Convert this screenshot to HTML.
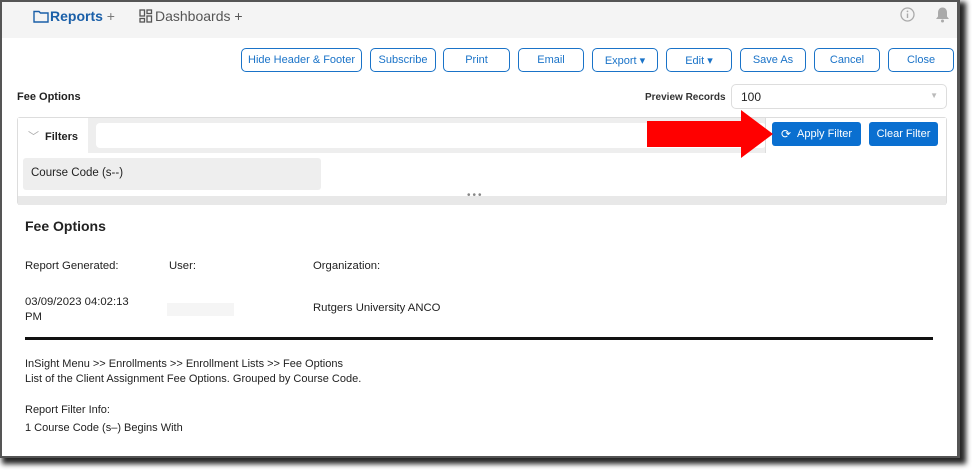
<!DOCTYPE html>
<html><head><style>
*{box-sizing:border-box;margin:0;padding:0}
body{width:972px;height:470px;background:#fff;font-family:"Liberation Sans",Arial,sans-serif;position:relative;overflow:hidden;color:#222}
.frame{position:absolute;left:0;top:0;width:960px;height:458px;border:2px solid #555;border-right-width:3px;background:#fff;box-shadow:4px 4px 5px 2px rgba(0,0,0,.85)}
.a{position:absolute;white-space:nowrap}
.hdr{position:absolute;left:0;top:0;width:955px;height:36px;background:#f4f4f4}
.btn{position:absolute;top:46px;height:24px;border:1.3px solid #1a73c8;border-radius:5px;color:#1a73c8;font-size:11px;display:flex;align-items:center;justify-content:center;background:#fff}
.bb{position:absolute;top:120px;height:24px;background:#0a6fd0;color:#fff;border-radius:3px;font-size:11px;display:flex;align-items:center;justify-content:center}
.t{font-size:11.5px;color:#222}
</style></head><body>
<div class="frame">
 <div class="hdr">
  <svg class="a" style="left:31px;top:8px" width="16" height="13" viewBox="0 0 16 13"><path d="M1 1.5h5l1.5 1.5H15v9H1z" fill="none" stroke="#1a5fa8" stroke-width="1.4"/></svg>
  <div class="a" style="left:48px;top:6px;font-size:14px;color:#1a5fa8;font-weight:bold">Reports <span style="color:#777;font-weight:normal">+</span></div>
  <svg class="a" style="left:137px;top:7px" width="14" height="14" viewBox="0 0 14 14" fill="none" stroke="#555" stroke-width="1.3"><rect x="1" y="1" width="4.5" height="6"/><rect x="8" y="1" width="4.5" height="3.5"/><rect x="1" y="9.5" width="4.5" height="3.5"/><rect x="8" y="7" width="4.5" height="6"/></svg>
  <div class="a" style="left:153px;top:6px;font-size:14px;color:#555">Dashboards +</div>
  <svg class="a" style="left:898px;top:5px" width="15" height="15" viewBox="0 0 15 15"><circle cx="7.5" cy="7.5" r="6.5" fill="none" stroke="#aaa" stroke-width="1.3"/><rect x="6.8" y="6.5" width="1.4" height="4.5" fill="#aaa"/><circle cx="7.5" cy="4.4" r=".9" fill="#aaa"/></svg>
  <svg class="a" style="left:933px;top:4px" width="15" height="18" viewBox="0 0 15 18"><path d="M7.5 1.5c-3 0-4.5 2.5-4.5 5v4L1 13h13l-2-2.5v-4c0-2.5-1.5-5-4.5-5z" fill="#aaa"/><circle cx="7.5" cy="15" r="1.5" fill="#aaa"/></svg>
 </div>
 <div class="btn" style="left:239px;width:121px">Hide Header &amp; Footer</div>
 <div class="btn" style="left:368px;width:66px">Subscribe</div>
 <div class="btn" style="left:441px;width:67px">Print</div>
 <div class="btn" style="left:516px;width:66px">Email</div>
 <div class="btn" style="left:590px;width:66px">Export ▾</div>
 <div class="btn" style="left:664px;width:66px">Edit ▾</div>
 <div class="btn" style="left:738px;width:66px">Save As</div>
 <div class="btn" style="left:812px;width:66px">Cancel</div>
 <div class="btn" style="left:886px;width:66px">Close</div>
 <div class="a" style="left:15px;top:89px;font-size:11px;font-weight:bold">Fee Options</div>
 <div class="a" style="left:643px;top:90px;font-size:10px;font-weight:bold;color:#333">Preview Records</div>
 <div class="a" style="left:729px;top:82px;width:216px;height:25px;border:1px solid #ddd;border-radius:5px;font-size:12px;padding:5px 0 0 9px">100<span style="position:absolute;right:8px;top:6px;color:#bbb;font-size:8px">▼</span></div>
 <div class="a" style="left:15px;top:115px;width:930px;height:88px;border:1px solid #ddd;border-radius:3px;background:#fff">
  <div class="a" style="left:0;top:0;width:928px;height:35px;background:#eee"></div>
  <div class="a" style="left:0;top:0;width:70px;height:35px;background:#fff;font-size:11px;font-weight:bold;padding:10px 0 0 10px"><span style="color:#aaa;font-weight:normal;margin-right:6px">﹀</span>Filters</div>
  <div class="a" style="left:78px;top:5px;width:670px;height:25px;background:#fff;border-radius:4px"></div>
  <div class="a" style="left:747px;top:0;width:181px;height:35px;background:#fff;border-left:1px solid #ddd"></div>
  <div class="a" style="left:5px;top:40px;width:298px;height:32px;background:#eee;border-radius:3px;font-size:11.5px;padding:9px 0 0 8px">Course Code (s--)</div>
  <div class="a" style="left:0;top:78px;width:928px;height:9px;background:#e8e8e8"><span style="position:absolute;left:449px;top:-6px;font-size:10px;color:#888;letter-spacing:2px">•••</span></div>
 </div>
 <div class="bb" style="left:770px;width:89px"><span style="font-size:12px;margin-right:6px">⟳</span>Apply Filter</div>
 <div class="bb" style="left:867px;width:69px">Clear Filter</div>
 <svg class="a" style="left:643px;top:108px" width="130" height="50"><path d="M2 11h94V0l32 24-32 24V37H2z" fill="#f00"/></svg>
 <div class="a" style="left:23px;top:216px;font-size:14px;font-weight:bold">Fee Options</div>
 <div class="a t" style="left:23px;top:258px;font-size:11.3px">Report Generated:</div>
 <div class="a t" style="left:167px;top:258px;font-size:11.3px">User:</div>
 <div class="a t" style="left:311px;top:258px;font-size:11.3px">Organization:</div>
 <div class="a t" style="left:23px;top:293px;line-height:15px;font-size:11.3px">03/09/2023 04:02:13<br>PM</div>
 <div class="a" style="left:165px;top:301px;width:67px;height:13px;background:#f5f5f5"></div>
 <div class="a t" style="left:311px;top:300px;font-size:11.3px">Rutgers University ANCO</div>
 <div class="a" style="left:23px;top:335px;width:908px;height:3px;background:#111"></div>
 <div class="a" style="left:23px;top:355px;font-size:11px;line-height:15px">InSight Menu &gt;&gt; Enrollments &gt;&gt; Enrollment Lists &gt;&gt; Fee Options<br>List of the Client Assignment Fee Options. Grouped by Course Code.</div>
 <div class="a" style="left:23px;top:402px;font-size:11px">Report Filter Info:</div>
 <div class="a" style="left:23px;top:420px;font-size:11px">1 Course Code (s–) Begins With</div>
</div>
</body></html>
